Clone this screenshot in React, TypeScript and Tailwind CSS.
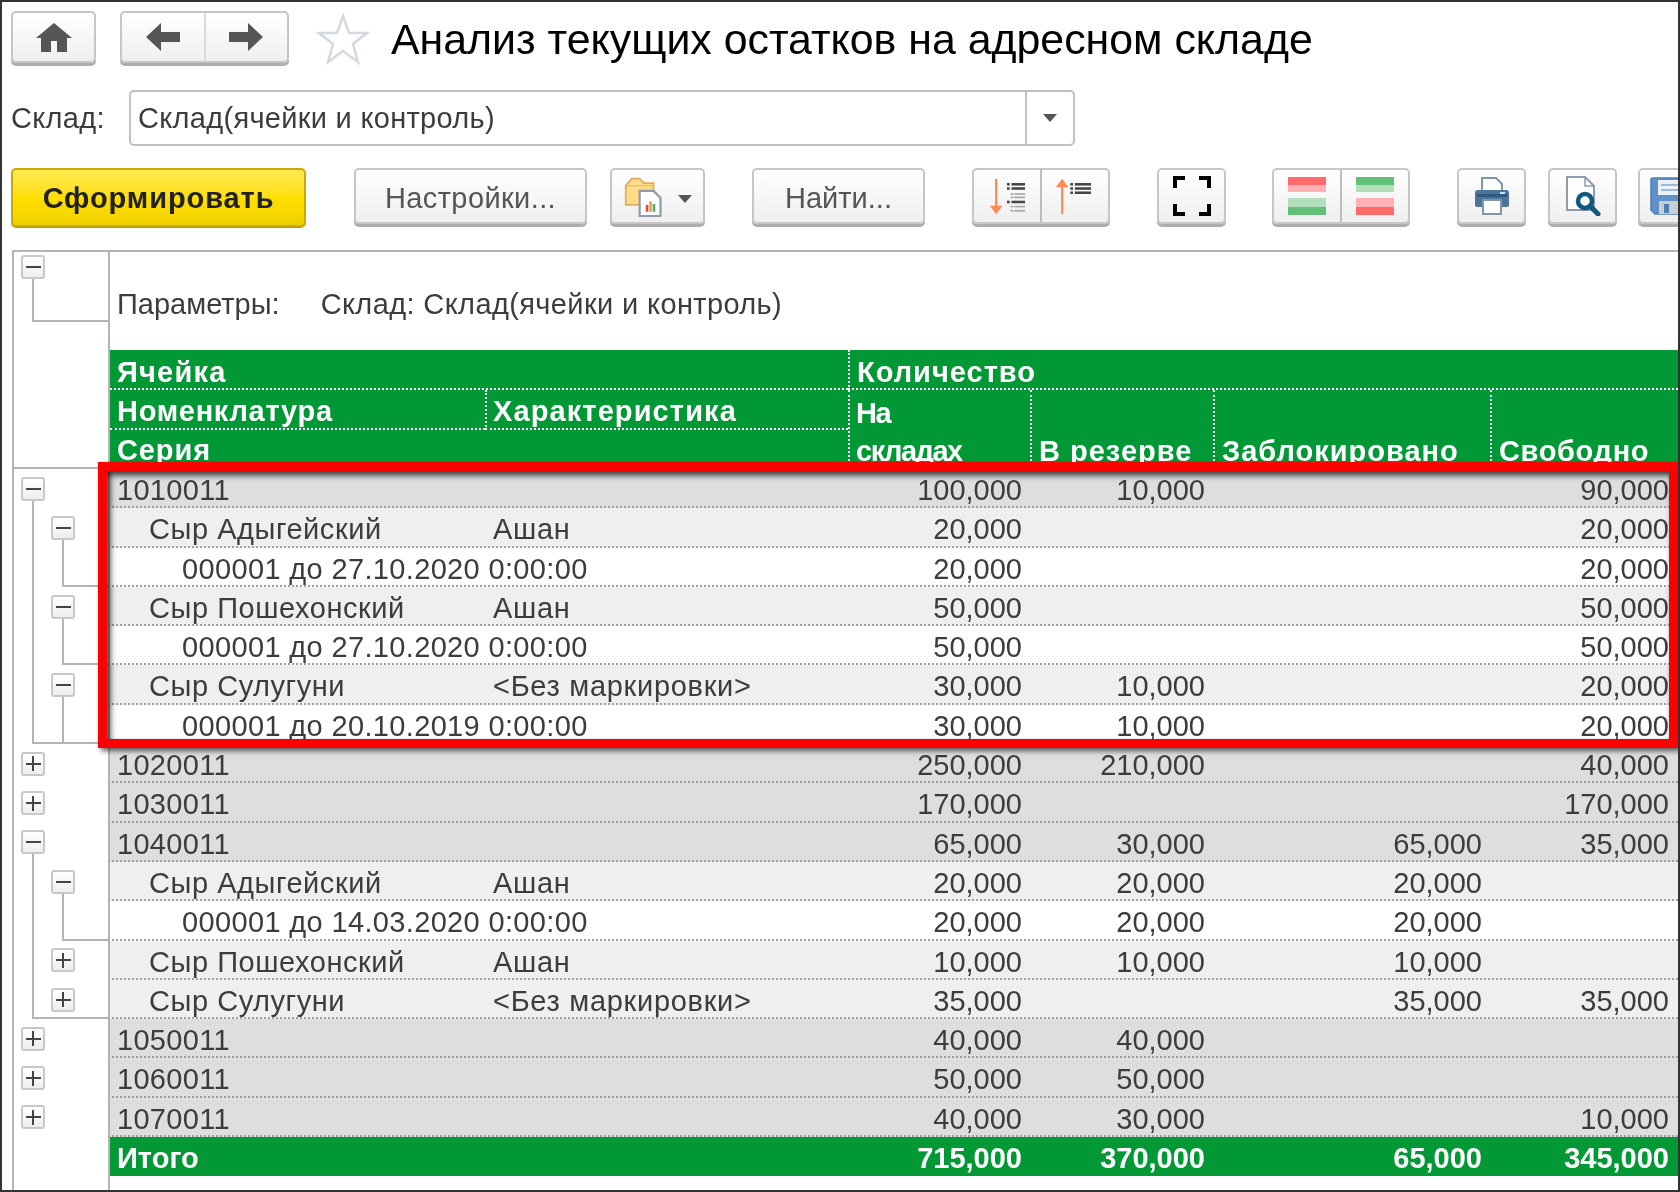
import React from "react";

type Line = "start" | "through" | "end" | undefined;

type Row = {
  level: 0 | 1 | 2;
  name: string;
  kind?: string;
  box?: "plus" | "minus";
  v0?: Line;
  v1?: Line;
  stock?: string;
  reserve?: string;
  blocked?: string;
  free?: string;
};

const rows: Row[] = [
  { level: 0, name: "1010011", box: "minus", v0: "start", stock: "100,000", reserve: "10,000", free: "90,000" },
  { level: 1, name: "Сыр Адыгейский", kind: "Ашан", box: "minus", v0: "through", v1: "start", stock: "20,000", free: "20,000" },
  { level: 2, name: "000001 до 27.10.2020 0:00:00", v0: "through", v1: "end", stock: "20,000", free: "20,000" },
  { level: 1, name: "Сыр Пошехонский", kind: "Ашан", box: "minus", v0: "through", v1: "start", stock: "50,000", free: "50,000" },
  { level: 2, name: "000001 до 27.10.2020 0:00:00", v0: "through", v1: "end", stock: "50,000", free: "50,000" },
  { level: 1, name: "Сыр Сулугуни", kind: "<Без маркировки>", box: "minus", v0: "through", v1: "start", stock: "30,000", reserve: "10,000", free: "20,000" },
  { level: 2, name: "000001 до 20.10.2019 0:00:00", v0: "end", v1: "end", stock: "30,000", reserve: "10,000", free: "20,000" },
  { level: 0, name: "1020011", box: "plus", stock: "250,000", reserve: "210,000", free: "40,000" },
  { level: 0, name: "1030011", box: "plus", stock: "170,000", free: "170,000" },
  { level: 0, name: "1040011", box: "minus", v0: "start", stock: "65,000", reserve: "30,000", blocked: "65,000", free: "35,000" },
  { level: 1, name: "Сыр Адыгейский", kind: "Ашан", box: "minus", v0: "through", v1: "start", stock: "20,000", reserve: "20,000", blocked: "20,000" },
  { level: 2, name: "000001 до 14.03.2020 0:00:00", v0: "through", v1: "end", stock: "20,000", reserve: "20,000", blocked: "20,000" },
  { level: 1, name: "Сыр Пошехонский", kind: "Ашан", box: "plus", v0: "through", stock: "10,000", reserve: "10,000", blocked: "10,000" },
  { level: 1, name: "Сыр Сулугуни", kind: "<Без маркировки>", box: "plus", v0: "end", stock: "35,000", blocked: "35,000", free: "35,000" },
  { level: 0, name: "1050011", box: "plus", stock: "40,000", reserve: "40,000" },
  { level: 0, name: "1060011", box: "plus", stock: "50,000", reserve: "50,000" },
  { level: 0, name: "1070011", box: "plus", stock: "40,000", reserve: "30,000", free: "10,000" },
];

const COLS = "grid grid-cols-[375px_363px_182px_183px_277px_1fr]";
const BTN = "flex shrink-0 items-center justify-center rounded-[5px] border-2 border-[#c6c6c6] bg-gradient-to-b from-white to-[#efefef] shadow-[0_3px_0_#adadad] text-[#555] text-[29px]";
const SEG = "flex h-full flex-1 items-center justify-center";
const HEAD_LOW = "row-span-2 border-l-2 border-dotted border-white leading-[38px]";

const TreeBox = ({ type, className }: { type: "plus" | "minus"; className: string }) => (
  <div className={`relative z-10 flex h-[24px] w-[24px] shrink-0 items-center justify-center rounded-[3px] border-2 border-[#c8c8c8] bg-gradient-to-b from-white to-[#eeeeee] ${className}`}>
    <div className="h-[2px] w-[15px] bg-[#444]" />
    {type === "plus" && <div className="absolute h-[15px] w-[2px] bg-[#444]" />}
  </div>
);

const Gutter = ({ row }: { row: Row }) => (
  <div className="relative flex h-full w-[94px] shrink-0 items-center">
    {row.v0 === "start" && <div className="absolute bottom-0 left-[18px] top-1/2 w-[2px] bg-[#b4b4b4]" />}
    {(row.v0 === "through" || row.v0 === "end") && <div className="absolute bottom-0 left-[18px] top-0 w-[2px] bg-[#b4b4b4]" />}
    {row.v0 === "end" && <div className="absolute bottom-0 left-[18px] right-0 h-[2px] bg-[#b4b4b4]" />}
    {row.v1 === "start" && <div className="absolute bottom-0 left-[48px] top-1/2 w-[2px] bg-[#b4b4b4]" />}
    {row.v1 === "end" && <div className="absolute bottom-0 left-[48px] top-0 w-[2px] bg-[#b4b4b4]" />}
    {row.v1 === "end" && <div className="absolute bottom-0 left-[48px] right-0 h-[2px] bg-[#b4b4b4]" />}
    {row.box && <TreeBox type={row.box} className={row.level === 0 ? "ml-[7px]" : "ml-[37px]"} />}
  </div>
);

const DataRow = ({ row }: { row: Row }) => {
  const bg = row.level === 0 ? "bg-[#dedede]" : row.level === 1 ? "bg-[#efefef]" : "bg-white";
  const name =
    row.level === 0
      ? "pl-[7px] tracking-[0.3px]"
      : row.level === 1
        ? "pl-[39px] tracking-[0.55px]"
        : "pl-[72px] tracking-[0.35px]";
  return (
    <div className="flex h-[39.3px]">
      <Gutter row={row} />
      <div className={`${COLS} flex-1 items-center border-b-2 border-l-2 border-b-[#a0a0a0] border-l-[#b4b4b4] border-dotted [border-left-style:solid] ${bg}`}>
        <div className={`whitespace-nowrap ${name}`}>{row.name}</div>
        <div className="pl-[8px] tracking-[0.7px]">{row.kind}</div>
        <div className="pr-[8px] text-right">{row.stock}</div>
        <div className="pr-[8px] text-right">{row.reserve}</div>
        <div className="pr-[8px] text-right">{row.blocked}</div>
        <div className="pr-[9px] text-right">{row.free}</div>
      </div>
    </div>
  );
};

const HomeIcon = () => (
  <svg width="36" height="30" viewBox="0 0 36 30"><path d="M18 1 L36 16 H31 V30 H21 V19 H15 V30 H5 V16 H0 Z" fill="#555" /></svg>
);
const ArrowIcon = ({ flip }: { flip?: boolean }) => (
  <svg width="34" height="28" viewBox="0 0 34 28" className={flip ? "-scale-x-100" : ""}><path d="M0 14 L15 0 V9 H34 V19 H15 V28 Z" fill="#555" /></svg>
);
const Caret = ({ className }: { className?: string }) => (
  <svg width="14" height="8" viewBox="0 0 14 8" className={className}><path d="M0 0 H14 L7 8 Z" fill="#555" /></svg>
);
const ReportIcon = () => (
  <svg width="40" height="40" viewBox="0 0 46 46">
    <path d="M2 10 L9 2 H18 L23 7 H34 V32 H2 Z" fill="#ffdc85" stroke="#dcae5e" strokeWidth="2" />
    <path d="M2 10 H34" stroke="#e6c070" strokeWidth="1.5" />
    <path d="M18 16 H34 L42 24 V45 H18 Z" fill="#fff" stroke="#8d9ca8" strokeWidth="2.5" />
    <rect x="25" y="32" width="3" height="8" fill="#e8493e" />
    <rect x="29" y="28" width="3" height="12" fill="#e8a33e" />
    <rect x="33" y="31" width="3" height="9" fill="#45b060" />
  </svg>
);
const SortDownIcon = () => (
  <svg width="36" height="37" viewBox="0 0 40 44" preserveAspectRatio="none">
    <path d="M8 1 V38" stroke="#ff8a50" strokeWidth="2.5" />
    <path d="M1 33 H15 L8 43 Z" fill="#ff8a50" />
    <g fill="#444">
      <rect x="20" y="6" width="3" height="3" /><rect x="25" y="6" width="16" height="3" />
      <rect x="20" y="11" width="3" height="3" /><rect x="25" y="11" width="16" height="3" />
      <rect x="20" y="27" width="3" height="3" /><rect x="25" y="27" width="16" height="3" />
    </g>
    <g fill="#a8a8a8">
      <rect x="24" y="18" width="3" height="2" /><rect x="28" y="18" width="12" height="2" />
      <rect x="24" y="22" width="3" height="2" /><rect x="28" y="22" width="12" height="2" />
      <rect x="24" y="33" width="3" height="2" /><rect x="28" y="33" width="12" height="2" />
      <rect x="24" y="38" width="3" height="2" /><rect x="28" y="38" width="12" height="2" />
    </g>
  </svg>
);
const SortUpIcon = () => (
  <svg width="36" height="37" viewBox="0 0 40 44" preserveAspectRatio="none" className="mr-[4px]">
    <path d="M8 6 V43" stroke="#ff8a50" strokeWidth="2.5" />
    <path d="M1 11 H15 L8 1 Z" fill="#ff8a50" />
    <g fill="#444">
      <rect x="17" y="6" width="3" height="3" /><rect x="22" y="6" width="19" height="3" />
      <rect x="17" y="11" width="3" height="3" /><rect x="22" y="11" width="19" height="3" />
      <rect x="17" y="16" width="3" height="3" /><rect x="22" y="16" width="19" height="3" />
    </g>
  </svg>
);
const FullscreenIcon = () => (
  <svg width="38" height="40" viewBox="0 0 38 40">
    <path d="M2 12 V2 H12 M26 2 H36 V12 M2 28 V38 H12 M26 38 H36 V28" fill="none" stroke="#000" strokeWidth="4" />
  </svg>
);
const Bars = ({ top, topLight, bottomLight, bottom }: { top: string; topLight: string; bottomLight: string; bottom: string }) => (
  <svg width="38" height="38" viewBox="0 0 38 38">
    <rect y="0" width="38" height="8" fill={top} />
    <rect y="8" width="38" height="7" fill={topLight} />
    <rect y="21" width="38" height="9" fill={bottomLight} />
    <rect y="30" width="38" height="8" fill={bottom} />
  </svg>
);
const PrintIcon = () => (
  <svg width="36" height="38" viewBox="0 0 36 38">
    <path d="M8 14 V1 H22 L28 7 V14" fill="#fff" stroke="#7f96a8" strokeWidth="2" />
    <path d="M4 13 H32 Q35 13 35 16 V28 Q35 30 32 30 H4 Q1 30 1 28 V16 Q1 13 4 13 Z" fill="#4d7599" />
    <rect x="3" y="17" width="30" height="3" fill="#2f5a80" />
    <rect x="26" y="15" width="5" height="2" fill="#cfe0ee" />
    <rect x="9" y="23" width="18" height="14" fill="#fff" stroke="#7f96a8" strokeWidth="2" />
  </svg>
);
const PreviewIcon = () => (
  <svg width="36" height="40" viewBox="0 0 36 40">
    <path d="M2 1 H20 L29 10 V34 H2 Z" fill="#fff" stroke="#8d9ca8" strokeWidth="2" />
    <path d="M20 1 V10 H29" fill="none" stroke="#8d9ca8" strokeWidth="1.5" />
    <circle cx="20" cy="25" r="7" fill="#fff" stroke="#11587f" strokeWidth="4.5" />
    <path d="M25 30 L33 38" stroke="#11587f" strokeWidth="5" strokeLinecap="round" />
  </svg>
);
const SaveIcon = () => (
  <svg width="40" height="38" viewBox="0 0 40 38">
    <path d="M1 3 Q1 1 3 1 H40 V37 H5 L1 33 Z" fill="#5f90c8" stroke="#4a7fb8" strokeWidth="1.5" />
    <rect x="8" y="3" width="32" height="15" fill="#eaf1fa" />
    <rect x="11" y="7" width="29" height="2" fill="#9db9d9" />
    <rect x="11" y="12" width="29" height="2" fill="#9db9d9" />
    <rect x="9" y="24" width="31" height="13" fill="#c9ced3" />
    <rect x="14" y="27" width="5" height="9" fill="#4a7fb8" />
  </svg>
);

const App = () => {
  return (
    <div className="relative flex h-[1192px] w-[1680px] flex-col overflow-hidden border-2 border-[#333] bg-white font-['Liberation_Sans',sans-serif] text-[29px] text-[#3c3c3c] blur-[0.6px]">
      {/* Title bar */}
      <div className="ml-[9px] mt-[9px] flex h-[55px] items-start">
        <div className={`${BTN} h-[52px] w-[85px]`}><HomeIcon /></div>
        <div className={`${BTN} ml-[24px] h-[52px] w-[169px]`}>
          <div className={`${SEG} border-r-2 border-[#dadada]`}><ArrowIcon /></div>
          <div className={SEG}><ArrowIcon flip /></div>
        </div>
        <svg width="54" height="52" viewBox="0 0 54 52" className="ml-[27px] mt-[2px]">
          <polygon points="27,3 33,20 51,20 37,31 42,49 27,38 12,49 17,31 3,20 21,20" fill="#fff" stroke="#d3d9df" strokeWidth="2.5" />
        </svg>
        <div className="ml-[21px] h-[55px] whitespace-nowrap text-[42.85px] leading-[56px] text-black">Анализ текущих остатков на адресном складе</div>
      </div>

      {/* Warehouse field */}
      <div className="ml-[9px] mt-[24px] flex h-[56px] items-center">
        <div className="w-[118px] pt-[2px] tracking-[0.3px]">Склад:</div>
        <div className="flex h-[56px] w-[946px] items-center rounded-[5px] border-2 border-[#c0c0c0]">
          <div className="flex-1 pl-[7px] pt-[2px] tracking-[0.3px]">Склад(ячейки и контроль)</div>
          <div className="flex h-full w-[48px] items-center justify-center border-l-2 border-[#c0c0c0]"><Caret /></div>
        </div>
      </div>

      {/* Toolbar */}
      <div className="ml-[9px] mt-[22px] flex h-[59px] items-start">
        <div className="flex h-[59px] w-[295px] shrink-0 items-center justify-center rounded-[5px] border-2 border-[#c9a90a] bg-gradient-to-b from-[#ffe94d] via-[#ffdf00] to-[#efd000] pt-[2px] font-bold tracking-[0.9px] text-[#222] shadow-[0_1px_0_#b89a00]">Сформировать</div>
        <div className={`${BTN} ml-[48px] h-[56px] w-[233px] pt-[6px] tracking-[0.4px]`}>Настройки...</div>
        <div className={`${BTN} ml-[23px] h-[56px] w-[95px] gap-[14px] pt-[2px]`}><ReportIcon /><Caret className="mt-[3px]" /></div>
        <div className={`${BTN} ml-[47px] h-[56px] w-[173px] pt-[6px]`}>Найти...</div>
        <div className={`${BTN} ml-[47px] h-[56px] w-[138px]`}>
          <div className={`${SEG} border-r-2 border-[#bdbdbd]`}><SortDownIcon /></div>
          <div className={SEG}><SortUpIcon /></div>
        </div>
        <div className={`${BTN} ml-[47px] h-[56px] w-[69px]`}><FullscreenIcon /></div>
        <div className={`${BTN} ml-[46px] h-[56px] w-[138px]`}>
          <div className={`${SEG} border-r-2 border-[#bdbdbd]`}><Bars top="#ff6b6b" topLight="#ffb0b3" bottomLight="#b3e0bc" bottom="#62bf78" /></div>
          <div className={SEG}><Bars top="#62bf78" topLight="#b3e0bc" bottomLight="#ffb0b3" bottom="#ff6b6b" /></div>
        </div>
        <div className={`${BTN} ml-[47px] h-[56px] w-[69px]`}><PrintIcon /></div>
        <div className={`${BTN} ml-[22px] h-[56px] w-[69px]`}><PreviewIcon /></div>
        <div className={`${BTN} ml-[21px] h-[56px] w-[69px] justify-start pl-[10px]`}><SaveIcon /></div>
      </div>

      {/* Report */}
      <div className="ml-[10px] mt-[23px] flex flex-1 flex-col border-l-2 border-t-2 border-[#b4b4b4]">
        <div className="flex h-[217px]">
          <div className="relative h-full w-[94px] shrink-0 border-b-2 border-[#b4b4b4]">
            <div className="absolute left-[18px] top-[12px] h-[56px] w-[2px] bg-[#b4b4b4]" />
            <div className="absolute left-[18px] right-0 top-[68px] h-[2px] bg-[#b4b4b4]" />
            <TreeBox type="minus" className="ml-[7px] mt-[3px]" />
          </div>
          <div className="flex flex-1 flex-col border-l-2 border-[#b4b4b4]">
            <div className="flex h-[98px] shrink-0 items-center pl-[7px] pt-[7px]">
              <span>Параметры:</span>
              <span className="ml-[41px] tracking-[0.38px]">Склад: Склад(ячейки и контроль)</span>
            </div>
            <div className={`${COLS} flex-1 grid-rows-[40px_40px_39px] overflow-hidden bg-[#029836] font-bold text-white`}>
              <div className="col-span-2 flex items-center border-b-2 border-dotted border-white pl-[7px] pt-[8px] tracking-[1.2px]">Ячейка</div>
              <div className="col-span-4 flex items-center border-b-2 border-l-2 border-dotted border-white pl-[7px] pt-[8px] tracking-[1px]">Количество</div>
              <div className="flex items-center border-b-2 border-dotted border-white pl-[7px] pt-[6px] tracking-[0.7px]">Номенклатура</div>
              <div className="flex items-center border-b-2 border-l-2 border-dotted border-white pl-[6px] pt-[6px] tracking-[1.1px]">Характеристика</div>
              <div className={`${HEAD_LOW} pl-[6px] pt-[4px] tracking-[-1.5px]`}>На<br />складах</div>
              <div className={`${HEAD_LOW} pl-[7px] pt-[42px] tracking-[1px]`}>В резерве</div>
              <div className={`${HEAD_LOW} pl-[7px] pt-[42px] tracking-[1px]`}>Заблокировано</div>
              <div className={`${HEAD_LOW} pl-[7px] pt-[42px] tracking-[0.65px]`}>Свободно</div>
              <div className="col-span-2 flex items-center pl-[7px] pt-[3px] tracking-[0.9px]">Серия</div>
            </div>
          </div>
        </div>

        {rows.map((row, i) => (
          <DataRow key={i} row={row} />
        ))}

        <div className="flex h-[39px]">
          <div className="w-[94px] shrink-0" />
          <div className={`${COLS} flex-1 items-center border-l-2 border-[#b4b4b4] bg-[#029836] font-bold text-white`}>
            <div className="pl-[7px]">Итого</div>
            <div />
            <div className="pr-[8px] text-right">715,000</div>
            <div className="pr-[8px] text-right">370,000</div>
            <div className="pr-[8px] text-right">65,000</div>
            <div className="pr-[9px] text-right">345,000</div>
          </div>
        </div>
        <div className="ml-[94px] flex-1 border-l-2 border-[#b4b4b4]" />
      </div>

      {/* Highlight frame */}
      <div className="absolute left-[96px] top-[460px] h-[286px] w-[1580px] border-[9px] border-[#ff0000] shadow-[3px_3px_5px_rgba(0,0,0,0.6),inset_3px_4px_6px_rgba(0,0,0,0.8)]" />
    </div>
  );
};

export default App;
